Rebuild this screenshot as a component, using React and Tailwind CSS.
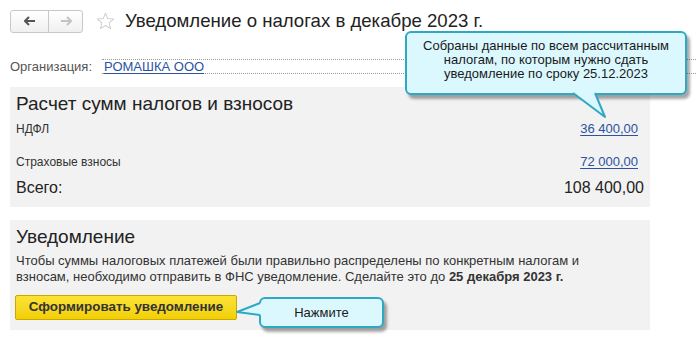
import React from 'react'

const font = { fontFamily: '"Liberation Sans", Arial, sans-serif' }

function Callout({ className, children, tail }) {
  return (
    <div className={`absolute ${className}`}>
      <div className="relative h-full w-full rounded-[6px] border-2 border-[#2fa8c4] bg-[#dbf8fe] shadow-[3px_4px_3px_rgba(0,0,0,0.35)] flex items-center justify-center text-center text-[13px] leading-[14px] text-[#1a1a1a]">
        {children}
      </div>
      {tail}
    </div>
  )
}

export default function App() {
  return (
    <div className="relative w-[696px] h-[342px] overflow-hidden bg-white text-[#333]" style={font}>
      {/* header */}
      <div className="flex items-center pl-[10px] pt-[9px]">
        <div className="flex h-[23px] w-[73px] rounded-[3px] border border-[#c8c8c8] bg-gradient-to-b from-white to-[#f0f0f0]">
          <div className="flex w-[38px] items-center justify-center border-r border-[#c8c8c8]">
            <svg width="12" height="10" viewBox="0 0 12 10">
              <path d="M5 1 L1 5 L5 9 M1 5 H11" fill="none" stroke="#555" strokeWidth="2" />
            </svg>
          </div>
          <div className="flex flex-1 items-center justify-center">
            <svg width="12" height="10" viewBox="0 0 12 10">
              <path d="M7 1 L11 5 L7 9 M11 5 H1" fill="none" stroke="#c4c4c4" strokeWidth="2" />
            </svg>
          </div>
        </div>
        <svg className="ml-[13px]" width="19" height="18" viewBox="0 0 24 23">
          <path d="M12 1.5 L14.9 8.4 L22.3 9 L16.7 13.9 L18.4 21.2 L12 17.3 L5.6 21.2 L7.3 13.9 L1.7 9 L9.1 8.4 Z" fill="none" stroke="#cfcfcf" strokeWidth="1.3" strokeLinejoin="round" />
        </svg>
        <div className="ml-[10px] text-[18.6px] leading-[24px] text-[#222]">Уведомление о налогах в декабре 2023 г.</div>
      </div>

      {/* organization */}
      <div className="mt-[24px] flex items-center pl-[10px]">
        <span className="w-[92px] text-[13px] text-[#555]">Организация:</span>
        <div className="flex h-[15px] flex-1 items-center border-y border-dotted border-[#999] pl-[2px]">
          <span className="text-[13px] leading-[13px] text-[#2c52a0] underline decoration-[#2c52a0] underline-offset-2">РОМАШКА ООО</span>
        </div>
      </div>

      {/* panel 1 */}
      <div className="mx-[10px] mt-[10px] h-[120px] w-[640px] bg-[#f2f2f2] pl-[6px] pr-[12px] pt-[6px]">
        <div className="text-[19px] leading-[22px] text-[#222]">Расчет сумм налогов и взносов</div>
        <div className="mt-[7px] flex items-center justify-between text-[12px] leading-[14px]">
          <span>НДФЛ</span>
          <span className="text-[13px] text-[#2c52a0] underline underline-offset-2">36 400,00</span>
        </div>
        <div className="mt-[19px] flex items-center justify-between text-[12px] leading-[14px]">
          <span>Страховые взносы</span>
          <span className="text-[13px] text-[#2c52a0] underline underline-offset-2">72 000,00</span>
        </div>
        <div className="mt-[10px] flex items-center justify-between text-[16px] leading-[18px] text-[#222]">
          <span>Всего:</span>
          <span className="-mr-[6px]">108 400,00</span>
        </div>
      </div>

      {/* panel 2 */}
      <div className="mx-[10px] mt-[13px] h-[110px] w-[640px] bg-[#f2f2f2] pl-[6px] pt-[6px]">
        <div className="text-[19px] leading-[22px] text-[#222]">Уведомление</div>
        <div className="mt-[5px] text-[13px] leading-[16px] text-[#333]">
          Чтобы суммы налоговых платежей были правильно распределены по конкретным налогам и
          <br />
          взносам, необходимо отправить в ФНС уведомление. Сделайте это до <b>25 декабря 2023 г.</b>
        </div>
        <button className="-ml-[1px] mt-[10px] flex h-[25px] w-[222px] items-center justify-center rounded-[2px] border border-[#c9a900] bg-gradient-to-b from-[#fbe233] to-[#f2d000] text-[13.4px] font-bold text-[#333]">
          Сформировать уведомление
        </button>
      </div>

      {/* callout 1 */}
      <Callout
        className="left-[405px] top-[31px] h-[64px] w-[282px]"
        tail={
          <svg className="absolute left-[160px] top-[60px]" width="50" height="28" viewBox="0 0 50 28">
            <path d="M8 1 L40 26 L30 1 Z" fill="#dbf8fe" />
            <path d="M8 2 L40 26 L30 2" fill="none" stroke="#2fa8c4" strokeWidth="2" strokeLinejoin="round" />
          </svg>
        }
      >
        <span className="-mt-[6px]">
          Собраны данные по всем рассчитанным<br />налогам, по которым нужно сдать<br />уведомление по сроку 25.12.2023
        </span>
      </Callout>

      {/* callout 2 */}
      <Callout
        className="left-[259px] top-[297px] h-[31px] w-[125px]"
        tail={
          <svg className="absolute -left-[23px] top-[4px]" width="26" height="16" viewBox="0 0 26 16">
            <path d="M25 2 L1 11 L25 14 Z" fill="#dbf8fe" />
            <path d="M24 2 L1 11 L24 14" fill="none" stroke="#2fa8c4" strokeWidth="2" strokeLinejoin="round" />
          </svg>
        }
      >
        Нажмите
      </Callout>
    </div>
  )
}
